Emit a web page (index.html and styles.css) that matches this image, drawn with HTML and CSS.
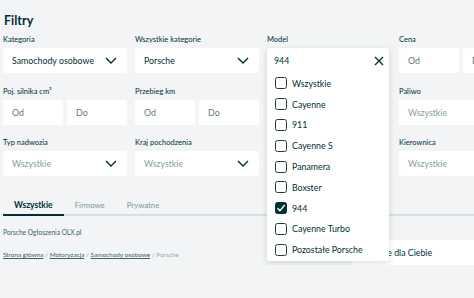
FILE: index.html
```html
<!DOCTYPE html>
<html lang="pl">
<head>
    <meta charset="UTF-8">
    <meta name="viewport" content="width=device-width, initial-scale=1.0">
    <title>Porsche - Ogłoszenia OLX.pl</title>
    <link rel="stylesheet" href="styles.css">
</head>
<body>
    <div class="page">
        <h1 class="title">Filtry</h1>
        <div class="filters">
            <div class="field">
                <label class="field-label">Kategoria</label>
                <div class="box select">
                    <span class="value">Samochody osobowe</span>
                    <svg class="chevron" width="12" height="7" viewBox="0 0 12 7"><path d="M1 1l5 5 5-5" fill="none" stroke="#002f34" stroke-width="1.4"/></svg>
                </div>
            </div>
            <div class="field">
                <label class="field-label">Wszystkie kategorie</label>
                <div class="box select">
                    <span class="value">Porsche</span>
                    <svg class="chevron" width="12" height="7" viewBox="0 0 12 7"><path d="M1 1l5 5 5-5" fill="none" stroke="#002f34" stroke-width="1.4"/></svg>
                </div>
            </div>
            <div class="field">
                <label class="field-label">Model</label>
                <div class="combo">
                    <div class="combo-panel">
                        <div class="combo-input">
                            <span class="value">944</span>
                            <svg class="clear" width="10" height="10" viewBox="0 0 10 10"><path d="M1 1l8 8M9 1l-8 8" fill="none" stroke="#002f34" stroke-width="1.3"/></svg>
                        </div>
                        <ul class="options">
                            <li class="option"><span class="check"></span>Wszystkie</li>
                            <li class="option"><span class="check"></span>Cayenne</li>
                            <li class="option"><span class="check"></span>911</li>
                            <li class="option"><span class="check"></span>Cayenne S</li>
                            <li class="option"><span class="check"></span>Panamera</li>
                            <li class="option"><span class="check"></span>Boxster</li>
                            <li class="option"><span class="check checked"><svg width="10" height="10" viewBox="0 0 10 10"><path d="M1.5 5.2l2.4 2.4 4.8-5.6" fill="none" stroke="#fff" stroke-width="1.4"/></svg></span>944</li>
                            <li class="option"><span class="check"></span>Cayenne Turbo</li>
                            <li class="option"><span class="check"></span>Pozostałe Porsche</li>
                        </ul>
                    </div>
                </div>
            </div>
            <div class="field">
                <label class="field-label">Cena</label>
                <div class="range">
                    <div class="box"><span class="muted">Od</span></div>
                    <div class="box"><span class="muted">Do</span></div>
                </div>
            </div>

            <div class="field">
                <label class="field-label">Poj. silnika cm³</label>
                <div class="range">
                    <div class="box"><span class="muted">Od</span></div>
                    <div class="box"><span class="muted">Do</span></div>
                </div>
            </div>
            <div class="field">
                <label class="field-label">Przebieg km</label>
                <div class="range">
                    <div class="box"><span class="muted">Od</span></div>
                    <div class="box"><span class="muted">Do</span></div>
                </div>
            </div>
            <!-- covered by the model dropdown -->
            <div class="field"></div>
            <div class="field">
                <label class="field-label">Paliwo</label>
                <div class="box select">
                    <span class="placeholder">Wszystkie</span>
                    <svg class="chevron" width="12" height="7" viewBox="0 0 12 7"><path d="M1 1l5 5 5-5" fill="none" stroke="#002f34" stroke-width="1.4"/></svg>
                </div>
            </div>

            <div class="field">
                <label class="field-label">Typ nadwozia</label>
                <div class="box select">
                    <span class="placeholder">Wszystkie</span>
                    <svg class="chevron" width="12" height="7" viewBox="0 0 12 7"><path d="M1 1l5 5 5-5" fill="none" stroke="#002f34" stroke-width="1.4"/></svg>
                </div>
            </div>
            <div class="field">
                <label class="field-label">Kraj pochodzenia</label>
                <div class="box select">
                    <span class="placeholder">Wszystkie</span>
                    <svg class="chevron" width="12" height="7" viewBox="0 0 12 7"><path d="M1 1l5 5 5-5" fill="none" stroke="#002f34" stroke-width="1.4"/></svg>
                </div>
            </div>
            <div class="field"></div>
            <div class="field">
                <label class="field-label">Kierownica</label>
                <div class="box select">
                    <span class="placeholder">Wszystkie</span>
                    <svg class="chevron" width="12" height="7" viewBox="0 0 12 7"><path d="M1 1l5 5 5-5" fill="none" stroke="#002f34" stroke-width="1.4"/></svg>
                </div>
            </div>
        </div>

        <div class="tabs">
            <a href="#" class="tab active">Wszystkie</a>
            <a href="#" class="tab">Firmowe</a>
            <a href="#" class="tab">Prywatne</a>
        </div>

        <p class="site-info">Porsche Ogłoszenia OLX.pl</p>

        <div class="bottom-row">
            <div class="breadcrumb">
                <a href="#">Strona główna</a> / <a href="#">Motoryzacja</a> / <a href="#">Samochody osobowe</a> / <span class="current">Porsche</span>
            </div>
            <div class="sort">Polecane dla Ciebie</div>
        </div>
    </div>
</body>
</html>
```

FILE: styles.css
```css
body {
    margin: 0;
    padding: 0;
    background-color: #f2f4f5;
    color: #002f34;
    font-family: Lato, "Open Sans", sans-serif;
    overflow: hidden;
}
.page {
    width: 520px;
    padding-left: 3px;
}
.title {
    font-size: 12.5px;
    line-height: 16px;
    font-weight: bold;
    margin: 13px 0 0 1px;
}
.filters {
    display: grid;
    grid-template-columns: repeat(4, 124px);
    grid-auto-rows: 39px;
    column-gap: 8px;
    row-gap: 12.5px;
    margin-top: 5px;
}
.field-label {
    display: block;
    font-size: 7.5px;
    line-height: 12px;
    margin-bottom: 2px;
}
.box {
    background-color: #fff;
    height: 25px;
    border-radius: 2px;
    display: flex;
    align-items: center;
    padding: 0 9px;
    box-sizing: border-box;
    font-size: 8.8px;
}
.select {
    justify-content: space-between;
}
.chevron {
    margin-right: 1px;
}
.range {
    display: flex;
    gap: 4px;
}
.range .box {
    flex: 1;
}
.muted {
    color: #5c7a7d;
}
.placeholder {
    color: #8aa0a2;
}

/* model dropdown */
.combo {
    position: relative;
    height: 25px;
}
.combo-panel {
    position: absolute;
    top: 0;
    left: 0;
    right: 2px;
    background-color: #fff;
    border-radius: 3px;
    box-shadow: 0 2px 6px rgba(0, 47, 52, 0.15);
    z-index: 5;
}
.combo-input {
    height: 25px;
    display: flex;
    align-items: center;
    justify-content: space-between;
    padding: 0 5px 0 7px;
    font-size: 8.8px;
}
.options {
    list-style: none;
    margin: 0;
    padding: 0 0 1px 0;
}
.option {
    height: 20.8px;
    display: flex;
    align-items: center;
    padding-left: 8px;
    gap: 5px;
    font-size: 8.8px;
}
.check {
    width: 12px;
    height: 12px;
    box-sizing: border-box;
    border: 1.5px solid #23383d;
    border-radius: 2.5px;
    display: flex;
    align-items: center;
    justify-content: center;
}
.check.checked {
    background-color: #002f34;
    border-color: #002f34;
}

/* tabs */
.tabs {
    display: flex;
    margin-top: 18px;
    border-bottom: 2px solid #d8dfe0;
}
.tab {
    font-size: 7.8px;
    line-height: 12px;
    padding: 5px 11px 3px;
    margin-bottom: -2px;
    border-bottom: 2px solid transparent;
    color: #7f9799;
    text-decoration: none;
}
.tab.active {
    font-size: 8.5px;
    color: #002f34;
    font-weight: bold;
    border-bottom-color: #002f34;
}
.site-info {
    font-size: 6.6px;
    line-height: 10px;
    color: #406367;
    margin: 11px 0 0 0;
}
.bottom-row {
    display: flex;
    justify-content: space-between;
    align-items: center;
    margin-top: 3px;
}
.breadcrumb {
    font-size: 6.4px;
    color: #7f9799;
    padding-top: 4px;
}
.breadcrumb a {
    color: #406367;
}
.breadcrumb .current {
    color: #98aaac;
}
.sort {
    width: 171px;
    height: 25px;
    box-sizing: border-box;
    background-color: #fff;
    display: flex;
    align-items: center;
    padding-left: 5px;
    font-size: 8.8px;
}
```
